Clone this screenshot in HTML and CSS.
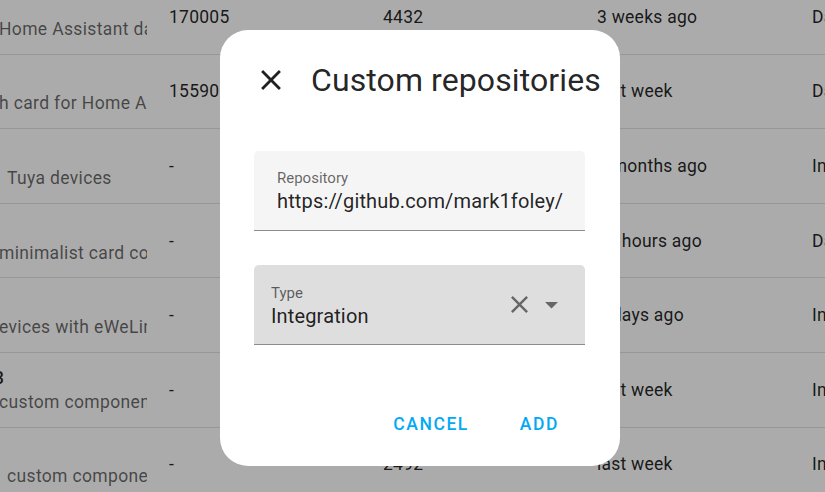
FILE: index.html
```html
<!DOCTYPE html>
<html lang="en">
<head>
<meta charset="utf-8">
<title>Custom repositories</title>
<link rel="stylesheet" href="styles.css">
</head>
<body>
<div class="table-viewport">
  <div class="table">
    <div class="row">
      <div class="cell name"><div class="title">&nbsp;</div><div class="desc">Home Assistant dashboard cards</div></div>
      <div class="cell">170005</div>
      <div class="cell">4432</div>
      <div class="cell">3 weeks ago</div>
      <div class="cell">Dashboard</div>
    </div>
    <div class="row">
      <div class="cell name"><div class="title">&nbsp;</div><div class="desc">h card for Home Assistant</div></div>
      <div class="cell">155901</div>
      <div class="cell">3318</div>
      <div class="cell">last week</div>
      <div class="cell">Dashboard</div>
    </div>
    <div class="row">
      <div class="cell name"><div class="title">&nbsp;</div><div class="desc indent">Tuya devices</div></div>
      <div class="cell">-</div>
      <div class="cell">1624</div>
      <div class="cell">2 months ago</div>
      <div class="cell">Integration</div>
    </div>
    <div class="row">
      <div class="cell name"><div class="title">&nbsp;</div><div class="desc">minimalist card collection</div></div>
      <div class="cell">-</div>
      <div class="cell">1488</div>
      <div class="cell">13 hours ago</div>
      <div class="cell">Dashboard</div>
    </div>
    <div class="row">
      <div class="cell name"><div class="title">&nbsp;</div><div class="desc">evices with eWeLink</div></div>
      <div class="cell">-</div>
      <div class="cell">2907</div>
      <div class="cell">4 days ago</div>
      <div class="cell">Integration</div>
    </div>
    <div class="row">
      <div class="cell name"><div class="title"><span class="tail">3</span></div><div class="desc">custom component</div></div>
      <div class="cell">-</div>
      <div class="cell">2735</div>
      <div class="cell">last week</div>
      <div class="cell">Integration</div>
    </div>
    <div class="row">
      <div class="cell name"><div class="title">&nbsp;</div><div class="desc indent">custom component</div></div>
      <div class="cell">-</div>
      <div class="cell">2492</div>
      <div class="cell">last week</div>
      <div class="cell">Integration</div>
    </div>
  </div>
</div>

<div class="scrim"></div>

<div class="dialog-layer">
  <div class="dialog">
    <div class="dialog-header">
      <svg class="close-icon" viewBox="0 0 24 24" aria-hidden="true"><path d="M19,6.41L17.59,5L12,10.59L6.41,5L5,6.41L10.59,12L5,17.59L6.41,19L12,13.41L17.59,19L19,17.59L13.41,12L19,6.41Z"/></svg>
      <div class="dialog-title">Custom repositories</div>
    </div>
    <div class="dialog-content">
      <div class="field field-text">
        <div class="field-label">Repository</div>
        <div class="field-value">https://github.com/mark1foley/ha-gtfs-rt-v2</div>
      </div>
      <div class="field field-select">
        <div class="field-main">
          <div class="field-label">Type</div>
          <div class="field-value">Integration</div>
        </div>
        <svg class="clear-icon" viewBox="0 0 24 24" aria-hidden="true"><path d="M19,6.41L17.59,5L12,10.59L6.41,5L5,6.41L10.59,12L5,17.59L6.41,19L12,13.41L17.59,19L19,17.59L13.41,12L19,6.41Z"/></svg>
        <svg class="menu-icon" viewBox="0 0 24 24" aria-hidden="true"><path d="M7,10L12,15L17,10H7Z"/></svg>
      </div>
    </div>
    <div class="dialog-actions">
      <div class="btn">Cancel</div>
      <div class="btn">Add</div>
    </div>
  </div>
</div>
</body>
</html>
```
FILE: styles.css
```css
* { box-sizing: border-box; }

html, body {
  margin: 0;
  padding: 0;
  width: 825px;
  height: 492px;
  overflow: hidden;
  background: #ffffff;
  font-family: Roboto, "Noto Sans", Arial, sans-serif;
  color: rgba(0, 0, 0, 0.87);
}

/* ---------- background table ---------- */
.table-viewport {
  width: 825px;
  height: 492px;
  overflow: hidden;
}

.table {
  margin-top: -20px; /* table is scrolled */
  width: 900px;
}

.row {
  display: grid;
  grid-template-columns: 153px 214px 214px 215px 104px;
  height: 74.6px;
  border-bottom: 1px solid rgba(0, 0, 0, 0.12);
  align-items: center;
  font-size: 17.5px;
  letter-spacing: 0.25px;
}

.cell {
  padding-left: 16px;
  white-space: nowrap;
  overflow: hidden;
}

.cell.name {
  padding-left: 0;
  padding-right: 6px;
}

.name .title,
.name .desc {
  overflow: hidden;
  white-space: nowrap;
  line-height: 24px;
}

.name .title {
  font-weight: 500;
  color: rgba(0, 0, 0, 0.87);
}

.name .tail {
  margin-left: -6px;
}

.name .desc {
  color: rgba(0, 0, 0, 0.6);
  letter-spacing: 0.35px;
  text-indent: -1px;
}

.name .desc.indent {
  text-indent: 0;
  padding-left: 7px;
}

/* ---------- overlay ---------- */
.scrim {
  position: fixed;
  inset: 0;
  background: rgba(0, 0, 0, 0.33);
}

.dialog-layer {
  position: fixed;
  inset: 0;
  display: flex;
  align-items: flex-start;
  justify-content: flex-start;
  padding: 30px 0 0 220px;
}

.dialog {
  width: 400px;
  height: 436px;
  background: #ffffff;
  border-radius: 28px;
  padding: 0 35px 0 34px;
  display: flex;
  flex-direction: column;
}

.dialog-header {
  height: 100px;
  display: flex;
  align-items: center;
  gap: 23px;
}

.close-icon {
  width: 34px;
  height: 34px;
  flex: none;
  fill: rgba(0, 0, 0, 0.87);
}

.dialog-title {
  font-size: 32px;
  font-weight: 400;
  white-space: nowrap;
  color: rgba(0, 0, 0, 0.87);
  letter-spacing: 0.1px;
}

.dialog-content {
  margin-top: 21px;
  display: flex;
  flex-direction: column;
  gap: 34px;
}

.field {
  height: 80px;
  border-radius: 5px 5px 0 0;
  border-bottom: 1px solid #8c8c8c;
}

.field-text {
  background: #f5f5f5;
  padding: 18px 22px 17px 23px;
}

.field-select {
  background: #dedede;
  display: flex;
  align-items: center;
  padding: 0 18px 0 17px;
}

.field-main {
  flex: 1;
  min-width: 0;
  padding-top: 3px;
}

.field-label {
  font-size: 15px;
  line-height: 18px;
  color: rgba(0, 0, 0, 0.6);
}

.field-value {
  margin-top: 2px;
  font-size: 20px;
  line-height: 24px;
  color: rgba(0, 0, 0, 0.87);
  white-space: nowrap;
  overflow: hidden;
  letter-spacing: 0.15px;
}

.clear-icon {
  width: 29px;
  height: 29px;
  flex: none;
  fill: rgba(0, 0, 0, 0.54);
  margin-right: 2px;
}

.menu-icon {
  width: 31px;
  height: 31px;
  flex: none;
  fill: rgba(0, 0, 0, 0.54);
}

.dialog-actions {
  margin-top: auto;
  margin-bottom: 20px;
  display: flex;
  justify-content: flex-end;
  gap: 31px;
  padding-right: 16px;
}

.btn {
  height: 45px;
  padding: 0 10px;
  display: flex;
  align-items: center;
  font-size: 17.5px;
  font-weight: 500;
  text-transform: uppercase;
  letter-spacing: 1.56px;
  color: #03a9f4;
}
```
